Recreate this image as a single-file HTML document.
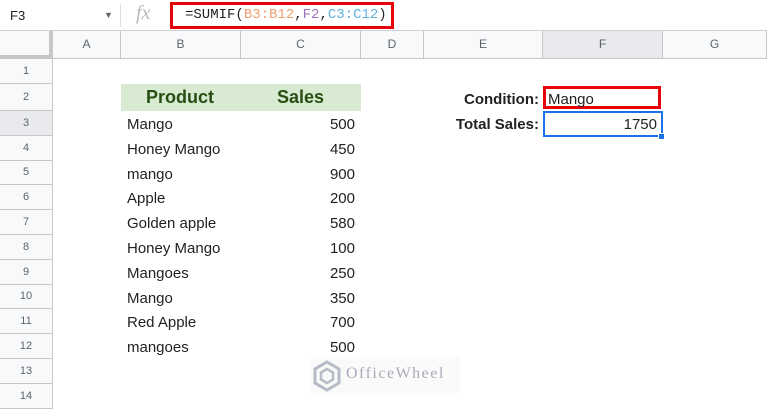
<!DOCTYPE html><html><head><style>
body{margin:0;width:767px;height:413px;overflow:hidden;background:#fff;font-family:"Liberation Sans",Arial,sans-serif;position:relative}
div{position:absolute;box-sizing:border-box}
.ch{top:31px;height:28px;border-right:1px solid #c7c7c7;border-bottom:1px solid #c7c7c7;background:#f8f9fa;color:#5f6368;font-size:12px;text-align:center;line-height:27px}
.rh{left:0;width:53px;border-right:1px solid #c7c7c7;border-bottom:1px solid #c7c7c7;background:#f8f9fa;color:#5f6368;font-size:11px;text-align:center}
.t{font-size:15px;color:#222;}
</style></head><body>
<div style="left:0;top:0;width:767px;height:31px;border-bottom:1px solid #d0d0d0;background:#fff"></div>
<div style="left:10px;top:8px;font-size:13px;color:#222">F3</div>
<div style="left:104px;top:10px;font-size:9px;color:#666">▼</div>
<div style="left:120px;top:4px;width:1px;height:23px;background:#ddd"></div>
<div style="left:136px;top:2px;font-family:'Liberation Serif',serif;font-style:italic;font-size:20px;color:#bbb">fx</div>
<div style="left:170px;top:2px;width:224px;height:27px;border:3px solid #e8000b"></div>
<div style="left:185px;top:7px;font-family:'Liberation Mono',monospace;font-size:14px;color:#222">=SUMIF(<span style="color:#f0a070">B3:B12</span>,<span style="color:#a070c0">F2</span>,<span style="color:#60b0e0">C3:C12</span>)</div>
<div style="left:0;top:31px;width:53px;height:28px;background:#f8f9fa;border-right:4px solid #c7c7c7;border-bottom:4px solid #c7c7c7"></div>
<div class="ch" style="left:53px;width:68px">A</div>
<div class="ch" style="left:121px;width:120px">B</div>
<div class="ch" style="left:241px;width:120px">C</div>
<div class="ch" style="left:361px;width:63px">D</div>
<div class="ch" style="left:424px;width:119px">E</div>
<div class="ch" style="left:543px;width:120px;background:#e8eaed">F</div>
<div class="ch" style="left:663px;width:104px">G</div>
<div class="rh" style="top:59px;height:25px;line-height:24px">1</div>
<div class="rh" style="top:84px;height:27px;line-height:26px">2</div>
<div class="rh" style="top:111px;height:25px;line-height:24px;background:#e8eaed">3</div>
<div class="rh" style="top:136px;height:25px;line-height:24px">4</div>
<div class="rh" style="top:161px;height:24px;line-height:23px">5</div>
<div class="rh" style="top:185px;height:25px;line-height:24px">6</div>
<div class="rh" style="top:210px;height:25px;line-height:24px">7</div>
<div class="rh" style="top:235px;height:25px;line-height:24px">8</div>
<div class="rh" style="top:260px;height:25px;line-height:24px">9</div>
<div class="rh" style="top:285px;height:24px;line-height:23px">10</div>
<div class="rh" style="top:309px;height:25px;line-height:24px">11</div>
<div class="rh" style="top:334px;height:25px;line-height:24px">12</div>
<div class="rh" style="top:359px;height:25px;line-height:24px">13</div>
<div class="rh" style="top:384px;height:25px;line-height:24px">14</div>
<div style="left:121px;top:84px;width:240px;height:27px;background:#d9ead3"></div>
<div style="left:146px;top:87px;font-size:18px;font-weight:bold;color:#274e13">Product</div>
<div style="left:277px;top:87px;font-size:18px;font-weight:bold;color:#274e13">Sales</div>
<div class="t" style="left:127px;top:113px;line-height:24.8px">Mango<br>Honey Mango<br>mango<br>Apple<br>Golden apple<br>Honey Mango<br>Mangoes<br>Mango<br>Red Apple<br>mangoes</div>
<div class="t" style="left:300px;width:55px;text-align:right;top:113px;line-height:24.8px">500<br>450<br>900<br>200<br>580<br>100<br>250<br>350<br>700<br>500</div>
<div style="left:420px;width:119px;text-align:right;top:91px;font-size:15px;font-weight:bold;color:#222">Condition:</div>
<div style="left:420px;width:119px;text-align:right;top:116px;font-size:15px;font-weight:bold;color:#222">Total Sales:</div>
<div style="left:543px;top:86px;width:118px;height:23px;border:3px solid #e8000b"></div>
<div class="t" style="left:548px;top:91px">Mango</div>
<div style="left:543px;top:111px;width:120px;height:26px;border:2px solid #1a73e8"></div>
<div style="left:658px;top:133px;width:7px;height:7px;background:#1a73e8;border:1px solid #fff"></div>
<div class="t" style="left:580px;width:77px;text-align:right;top:116px">1750</div>
<div style="left:310px;top:357px;width:150px;height:36px;background:#fafafa"></div>
<svg style="position:absolute;left:312px;top:360px" width="30" height="32" viewBox="0 0 30 32"><path d="M15 2L27 9V23L15 30L3 23V9Z" fill="none" stroke="#b8bcc8" stroke-width="3"/><path d="M15 9L21 12.5V19.5L15 23L9 19.5V12.5Z" fill="none" stroke="#b8bcc8" stroke-width="2.5"/></svg>
<div style="left:346px;top:365px;font-family:'Liberation Serif',serif;font-size:16px;letter-spacing:1.5px;color:#a8acb8">OfficeWheel</div>
</body></html>
